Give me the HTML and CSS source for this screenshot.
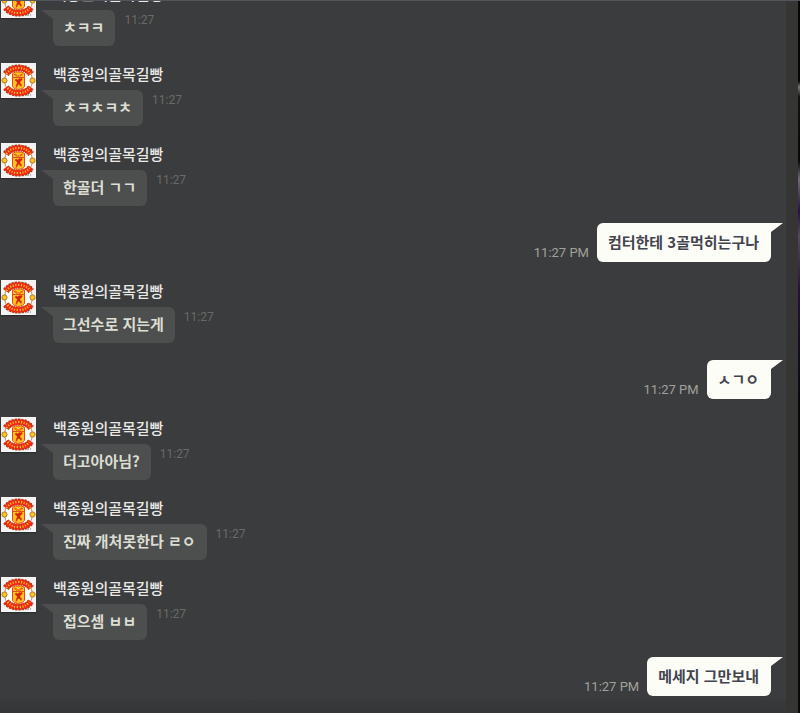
FILE: index.html
```
<!DOCTYPE html>
<html lang="ko">
<head>
<meta charset="utf-8">
<title>채팅</title>
<link rel="stylesheet" href="styles.css">
</head>
<body>
<svg class="defs" aria-hidden="true">
  <symbol id="crest" viewBox="0 0 35 35">
    <path d="M0 0h35v35H0z" fill="#f5f2f3"/>
    <circle cx="17.500" cy="17.500" r="14" fill="#fff" stroke="#a8782a" stroke-width=".8"/>
    <path d="M5 11C8 6.500 12 5 17.500 5S27 6.500 30 11M5 24.500c3 4 7 5.500 12.500 5.500S27 28.500 30 24.500" fill="none" stroke="#8a4a1c" stroke-width="7" stroke-dasharray="2 .8"/>
    <path d="M5 11C8 6.500 12 5 17.500 5S27 6.500 30 11M5 24.500c3 4 7 5.500 12.500 5.500S27 28.500 30 24.500" fill="none" stroke="#ee2c14" stroke-width="5.500"/>
    <path d="M5.500 11C8 7 12 5 17.500 5S27 7 29.500 11M6.500 25c3 3.500 6 5 11 5s8-1.500 11-5" fill="none" stroke="#ffb52a" stroke-width="2.200" stroke-dasharray="1.200 1.500"/>
    <circle cx="3.500" cy="17.500" r="2.600" fill="#ffc51e" stroke="#9c641c" stroke-width=".8"/>
    <circle cx="31.500" cy="17.500" r="2.600" fill="#ffc51e" stroke="#9c641c" stroke-width=".8"/>
    <path d="M11.500 10.500l3-1.500h6l3 1.500V23c0 2-3 3-6 3.500-3-.5-6-1.500-6-3.500z" fill="#ffc51e" stroke="#e8451b"/>
    <path d="M13 12l2-1v2h5v-2l2 1M12 14.500h11" fill="none" stroke="#e4501b"/>
    <path d="M14 17l1.500-1 1 1 2-1.500L20 16l1-1v2l-2 1.500v2l1.500 1-.5 2-1-1.500-2-1-1 2.500-1 1 .5-3 1-2z" fill="#d9200f" stroke="#d9200f" stroke-width=".5"/>
    <path d="M26 32h2m1 0h1" stroke="#6f777b"/>
  </symbol>
</svg>
<div class="window">
  <main class="chat">
    <article class="message incoming">
      <svg class="avatar" role="img" aria-label="프로필"><use href="#crest"/></svg>
      <div class="content">
        <h2 class="name">백종원의골목길빵</h2>
        <div class="line"><p class="bubble">ㅊㅋㅋ</p><time class="time">11:27</time></div>
      </div>
    </article>
    <article class="message incoming">
      <svg class="avatar" role="img" aria-label="프로필"><use href="#crest"/></svg>
      <div class="content">
        <h2 class="name">백종원의골목길빵</h2>
        <div class="line"><p class="bubble">ㅊㅋㅊㅋㅊ</p><time class="time">11:27</time></div>
      </div>
    </article>
    <article class="message incoming">
      <svg class="avatar" role="img" aria-label="프로필"><use href="#crest"/></svg>
      <div class="content">
        <h2 class="name">백종원의골목길빵</h2>
        <div class="line"><p class="bubble">한골더 ㄱㄱ</p><time class="time">11:27</time></div>
      </div>
    </article>
    <article class="message outgoing">
      <time class="time">11:27 PM</time><p class="bubble">컴터한테 3골먹히는구나</p>
    </article>
    <article class="message incoming">
      <svg class="avatar" role="img" aria-label="프로필"><use href="#crest"/></svg>
      <div class="content">
        <h2 class="name">백종원의골목길빵</h2>
        <div class="line"><p class="bubble">그선수로 지는게</p><time class="time">11:27</time></div>
      </div>
    </article>
    <article class="message outgoing">
      <time class="time">11:27 PM</time><p class="bubble">ㅅㄱㅇ</p>
    </article>
    <article class="message incoming">
      <svg class="avatar" role="img" aria-label="프로필"><use href="#crest"/></svg>
      <div class="content">
        <h2 class="name">백종원의골목길빵</h2>
        <div class="line"><p class="bubble">더고아아님?</p><time class="time">11:27</time></div>
      </div>
    </article>
    <article class="message incoming">
      <svg class="avatar" role="img" aria-label="프로필"><use href="#crest"/></svg>
      <div class="content">
        <h2 class="name">백종원의골목길빵</h2>
        <div class="line"><p class="bubble">진짜 개처못한다 ㄹㅇ</p><time class="time">11:27</time></div>
      </div>
    </article>
    <article class="message incoming">
      <svg class="avatar" role="img" aria-label="프로필"><use href="#crest"/></svg>
      <div class="content">
        <h2 class="name">백종원의골목길빵</h2>
        <div class="line"><p class="bubble">접으셈 ㅂㅂ</p><time class="time">11:27</time></div>
      </div>
    </article>
    <article class="message outgoing">
      <time class="time">11:27 PM</time><p class="bubble">메세지 그만보내</p>
    </article>
  </main>
  <div class="track"></div>
  <div class="edge"></div>
</div>
</body>
</html>
```
FILE: styles.css
```
* {
  box-sizing: border-box;
}

body {
  margin: 0;
  background: #3b3c3e;
  font-family: "Noto Sans CJK KR", sans-serif;
  font-size: 15px;
}

.defs {
  position: absolute;
  width: 0;
  height: 0;
}

.window {
  display: flex;
  height: 100vh;
  overflow: hidden;
  border-top: 1px solid #53555a;
}

.chat {
  flex: 1;
  display: flex;
  flex-direction: column;
  gap: 17px;
  margin-top: -18px;
  padding: 0 15px 0 1px;
  background: linear-gradient(to top, #353637, #39393b 13px, transparent 13px);
}

.message {
  display: flex;
  flex-shrink: 0;
}

.incoming {
  gap: 17px;
}

.outgoing {
  justify-content: flex-end;
  align-items: flex-end;
  gap: 8px;
  padding-bottom: 1px;
}

.avatar {
  width: 35px;
  height: 35px;
  box-shadow: 0 1px 1px #2c2d2f;
}

.name {
  margin: 0;
  height: 27px;
  color: #e9e9e7;
  font-size: 15px;
  font-weight: 500;
  line-height: 22px;
}

.line {
  display: flex;
  gap: 9px;
}

.bubble {
  position: relative;
  margin: 0;
  padding: 0 11px 2px 10px;
  border-radius: 6px;
  font-weight: 700;
  line-height: 34px;
}

.bubble::after {
  content: "";
  position: absolute;
  top: 0;
  width: 18px;
  height: 14px;
}

.incoming .bubble {
  background: #4c4f4d;
  color: #dcddd3;
}

.incoming .bubble::after {
  left: -12px;
  background: #4c4f4d;
  clip-path: polygon(0 0, 100% 0, 100% 100%, 12px 9px);
}

.outgoing .bubble {
  padding: 0 12px 2px 11px;
  background: #fdfdf8;
  color: #42444e;
  line-height: 37px;
}

.outgoing .bubble::after {
  right: -12px;
  background: #fdfdf8;
  clip-path: polygon(0 0, 100% 0, 6px 9px, 0 100%);
}

.time {
  font-family: Roboto, sans-serif;
  line-height: 20px;
}

.incoming .time {
  color: #696a66;
  font-size: 12px;
}

.outgoing .time {
  color: #a1a19b;
  font-size: 13px;
  line-height: 18px;
}

.track {
  width: 12px;
  background: #353534;
}

.edge {
  width: 2px;
  background: linear-gradient(#050607 80px, #777 86px, #111 96px, #08080a 160px, #716a76 178px, #25104a 210px, #55485f 235px, #24103f 290px, #08090b 400px);
}
```
